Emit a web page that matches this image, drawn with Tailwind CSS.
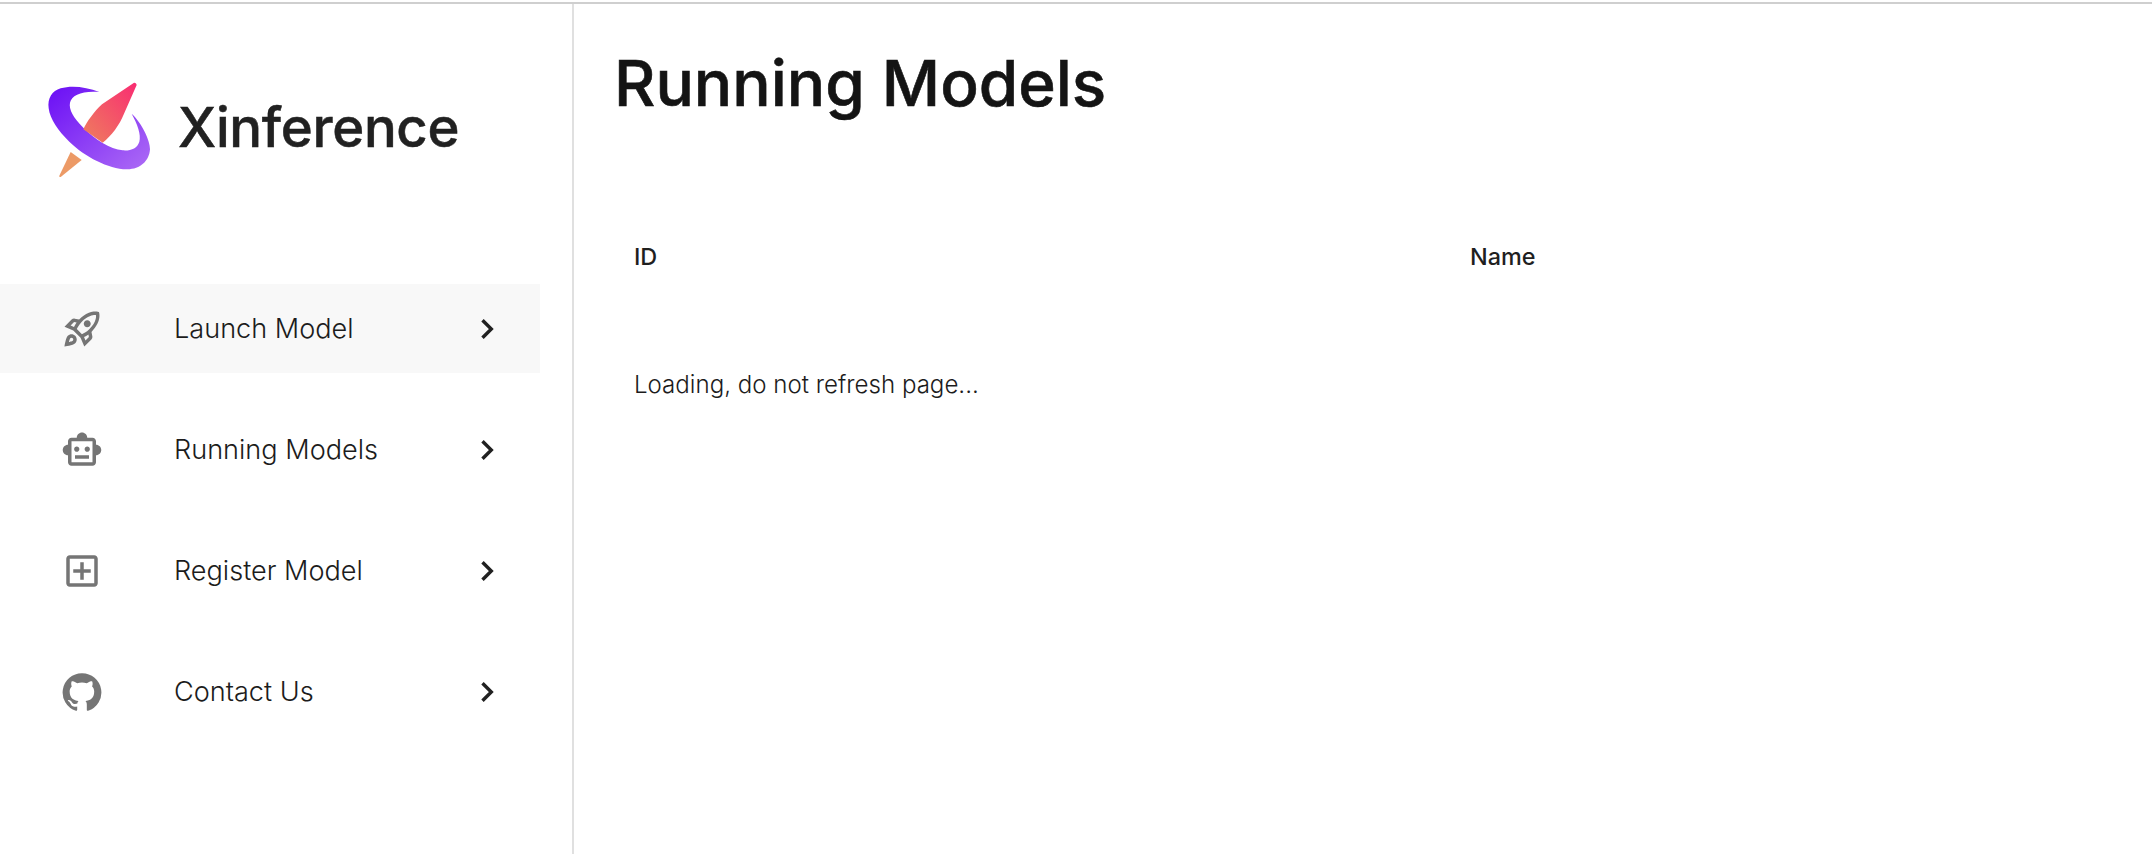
<!DOCTYPE html>
<html lang="en">
<head>
    <meta charset="UTF-8">
    <title>Xinference</title>
    <script src="https://cdn.jsdelivr.net/npm/@tailwindcss/browser@4"></script>
</head>
<body class="bg-white font-['Inter',sans-serif] text-[#212121] overflow-hidden">
    <div class="h-[854px] flex flex-col">
        <div class="h-[4px] shrink-0 border-t-[1px] border-b-[2px] border-t-white border-b-[#cfcfcf]"></div>
        <div class="flex flex-1 min-h-0">
            <!-- sidebar -->
            <aside class="w-[574px] shrink-0 border-r-2 border-[#e0e0e0]">
                <div class="flex items-center h-[280px] pl-[44px] pb-[26px]">
                    <svg class="w-[130px] h-[120px] ml-[-14px] shrink-0" viewBox="0 0 390 360">
                        <defs>
                            <linearGradient id="ring" x1="0" y1="0" x2="1" y2="1">
                                <stop offset="0" stop-color="#6a0ef5"/>
                                <stop offset="1" stop-color="#ad6cf5"/>
                            </linearGradient>
                            <linearGradient id="body" x1="1" y1="0" x2="0" y2="1">
                                <stop offset="0" stop-color="#f92c72"/>
                                <stop offset="1" stop-color="#ee7f5e"/>
                            </linearGradient>
                        </defs>
                        <path fill="url(#ring)" d="M208 63C170 48 125 42 92 52C66 60 52 82 56 112C60 145 85 180 118 212C165 258 235 293 290 295C330 296 358 270 360 235C361 210 335 155 305 128C322 160 334 190 328 212C322 232 302 240 278 238C240 234 195 205 160 170C130 140 116 115 120 95C124 72 160 58 208 63Z"/>
                        <path fill="url(#body)" d="M311 36C314 34 319 37 320 42L282 128C268 163 245 193 218 215L160 175C172 150 192 122 216 100Z"/>
                        <path fill="#ec9a66" d="M122 243L155 267L93 317C90 319 87 317 88 314Z"/>
                    </svg>
                    <span class="text-[54.5px] font-medium tracking-[-0.3px] [-webkit-text-stroke:0.5px_#212121] ml-[18px] mb-[6px]">Xinference</span>
                </div>
                <nav class="flex flex-col gap-[32px] w-[540px]">
                    <a class="flex items-center h-[89px] bg-[#f8f8f8]">
                        <svg class="w-[42px] h-[42px] ml-[61px] fill-[#757575]" viewBox="0 0 24 24"><path d="M6 15c-.83 0-1.58.34-2.12.88C2.7 17.06 2 22 2 22s4.94-.7 6.12-1.88c.54-.54.88-1.29.88-2.12 0-1.66-1.34-3-3-3zm.71 3.71c-.28.28-2.17.76-2.17.76s.47-1.88.76-2.17c.17-.19.42-.3.7-.3.55 0 1 .45 1 1 0 .28-.11.53-.29.71zm10.71-5.06c6.36-6.36 4.24-11.31 4.24-11.31S16.71.22 10.35 6.58l-2.49-.5c-.65-.13-1.33.08-1.81.55L2 10.69l5 2.14L11.17 17l2.14 5 4.05-4.05c.47-.47.68-1.15.55-1.81l-.49-2.49zM7.41 10.83l-1.91-.82 1.97-1.97 1.44.29c-.57.83-1.08 1.7-1.5 2.5zm6.58 7.67l-.82-1.91c.8-.42 1.67-.93 2.49-1.5l.29 1.44-1.96 1.97zM16 12.24c-1.32 1.32-3.38 2.4-4.04 2.73l-2.93-2.93c.32-.65 1.4-2.71 2.73-4.04 4.68-4.68 8.23-3.91 8.23-3.91s.77 3.55-3.99 8.15zM15 11c1.1 0 2-.9 2-2s-.9-2-2-2-2 .9-2 2 .9 2 2 2z"/></svg>
                        <span class="ml-[71px] pt-[1px] text-[27.1px] font-[350] text-[#1c1c1c] flex-1">Launch Model</span>
                        <svg class="w-[15px] h-[24px] mr-[45px] stroke-[#212121] fill-none" viewBox="0 0 15 24"><path d="M2.5 3.2l8.8 8.8-8.8 8.8" stroke-width="3.4"/></svg>
                    </a>
                    <a class="flex items-center h-[89px]">
                        <svg class="w-[42px] h-[42px] ml-[61px] fill-[#757575]" viewBox="0 0 24 24"><path d="M20 9V7c0-1.1-.9-2-2-2h-3c0-1.66-1.34-3-3-3S9 3.34 9 5H6c-1.1 0-2 .9-2 2v2c-1.66 0-3 1.34-3 3s1.34 3 3 3v4c0 1.1.9 2 2 2h12c1.1 0 2-.9 2-2v-4c1.66 0 3-1.34 3-3s-1.34-3-3-3zm-2 10H6V7h12v12zm-9-6c-.83 0-1.5-.67-1.5-1.5S8.17 10 9 10s1.5.67 1.5 1.5S9.83 13 9 13zm7.5-1.5c0 .83-.67 1.5-1.5 1.5s-1.5-.67-1.5-1.5.67-1.5 1.5-1.5 1.5.67 1.5 1.5zM8 15h8v2H8v-2z"/></svg>
                        <span class="ml-[71px] pt-[1px] text-[27.1px] font-[350] text-[#1c1c1c] flex-1">Running Models</span>
                        <svg class="w-[15px] h-[24px] mr-[45px] stroke-[#212121] fill-none" viewBox="0 0 15 24"><path d="M2.5 3.2l8.8 8.8-8.8 8.8" stroke-width="3.4"/></svg>
                    </a>
                    <a class="flex items-center h-[89px]">
                        <svg class="w-[42px] h-[42px] ml-[61px] fill-[#757575]" viewBox="0 0 24 24"><path d="M19 3H5c-1.11 0-2 .9-2 2v14c0 1.1.89 2 2 2h14c1.1 0 2-.9 2-2V5c0-1.1-.9-2-2-2zm0 16H5V5h14v14zm-8-2h2v-4h4v-2h-4V7h-2v4H7v2h4z"/></svg>
                        <span class="ml-[71px] pt-[1px] text-[27.1px] font-[350] text-[#1c1c1c] flex-1">Register Model</span>
                        <svg class="w-[15px] h-[24px] mr-[45px] stroke-[#212121] fill-none" viewBox="0 0 15 24"><path d="M2.5 3.2l8.8 8.8-8.8 8.8" stroke-width="3.4"/></svg>
                    </a>
                    <a class="flex items-center h-[89px]">
                        <svg class="w-[42px] h-[42px] ml-[61px] fill-[#757575]" viewBox="0 0 24 24"><path d="M12 1.27a11 11 0 00-3.48 21.46c.55.09.73-.28.73-.55v-1.84c-3.03.64-3.67-1.46-3.67-1.46-.55-1.29-1.28-1.65-1.28-1.65-.92-.65.1-.65.1-.65 1.1 0 1.73 1.1 1.73 1.1.92 1.65 2.57 1.2 3.21.92a2 2 0 01.64-1.47c-2.47-.27-5.04-1.19-5.04-5.5 0-1.1.46-2.1 1.2-2.84a3.76 3.76 0 010-2.93s.91-.28 3.11 1.1c1.8-.49 3.7-.49 5.5 0 2.1-1.38 3.02-1.1 3.02-1.1a3.76 3.76 0 010 2.93c.83.74 1.2 1.74 1.2 2.94 0 4.21-2.57 5.13-5.04 5.4.45.37.82.92.82 2.02v3.03c0 .27.1.64.73.55A11 11 0 0012 1.27"/></svg>
                        <span class="ml-[71px] pt-[1px] text-[27.1px] font-[350] text-[#1c1c1c] flex-1">Contact Us</span>
                        <svg class="w-[15px] h-[24px] mr-[45px] stroke-[#212121] fill-none" viewBox="0 0 15 24"><path d="M2.5 3.2l8.8 8.8-8.8 8.8" stroke-width="3.4"/></svg>
                    </a>
                </nav>
            </aside>
            <!-- main -->
            <main class="flex-1 pl-[40px]">
                <h1 class="text-[63.9px] font-medium [-webkit-text-stroke:0.6px_#141414] leading-[78px] text-[#141414] mt-[40px]">Running Models</h1>
                <div class="pl-[20px] mt-[119px] text-[#1f1f1f]">
                    <div class="grid grid-cols-[836px_1fr] text-[23.4px] font-medium leading-[32px]">
                        <div>ID</div>
                        <div>Name</div>
                    </div>
                    <div class="mt-[96px] text-[24.1px] font-[350] text-[#1c1c1c] leading-[32px]">Loading, do not refresh page...</div>
                </div>
            </main>
        </div>
    </div>
</body>
</html>
